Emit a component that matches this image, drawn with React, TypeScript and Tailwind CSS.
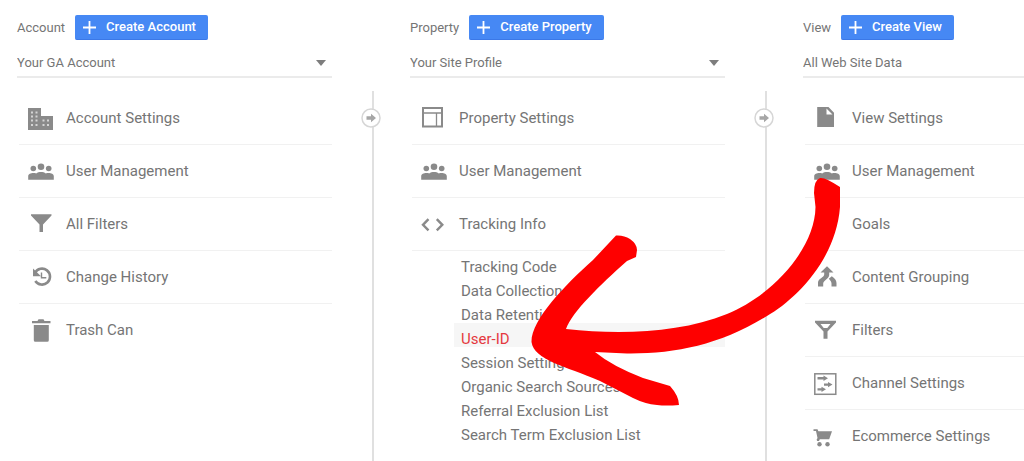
import type { ReactNode } from 'react';
import clsx from 'clsx';

type IconName =
  | 'building'
  | 'users'
  | 'funnel'
  | 'history'
  | 'trash'
  | 'layout'
  | 'code'
  | 'file'
  | 'flag'
  | 'merge'
  | 'filter'
  | 'channel'
  | 'cart';

interface Item {
  icon: IconName;
  label: string;
}

const accountItems: Item[] = [
  { icon: 'building', label: 'Account Settings' },
  { icon: 'users', label: 'User Management' },
  { icon: 'funnel', label: 'All Filters' },
  { icon: 'history', label: 'Change History' },
  { icon: 'trash', label: 'Trash Can' },
];

const propertyItems: Item[] = [
  { icon: 'layout', label: 'Property Settings' },
  { icon: 'users', label: 'User Management' },
  { icon: 'code', label: 'Tracking Info' },
];

const trackingItems = [
  'Tracking Code',
  'Data Collection',
  'Data Retention',
  'User-ID',
  'Session Settings',
  'Organic Search Sources',
  'Referral Exclusion List',
  'Search Term Exclusion List',
];

const viewItems: Item[] = [
  { icon: 'file', label: 'View Settings' },
  { icon: 'users', label: 'User Management' },
  { icon: 'flag', label: 'Goals' },
  { icon: 'merge', label: 'Content Grouping' },
  { icon: 'filter', label: 'Filters' },
  { icon: 'channel', label: 'Channel Settings' },
  { icon: 'cart', label: 'Ecommerce Settings' },
];

const icons: Record<IconName, ReactNode> = {
  building: (
    <>
      <path d="M1 4h13v8h12v14H1z" />
      <g fill="#d4d4d4">
        <path d="M4 7.5h2v2H4zM8.500 7.500h2v2h-2zM4 11.500h2v2H4zM8.500 11.500h2v2h-2zM4 15.500h2v2H4zM8.500 15.500h2v2h-2zM4 20h2v2H4zM8.500 20h2v2h-2z" />
        <path d="M15.500 15.500h2v2h-2zM20 15.500h2v2h-2zM15.500 20h2v2h-2zM20 20h2v2h-2z" />
      </g>
    </>
  ),
  users: (
    <>
      <circle cx="6.300" cy="11.500" r="2.800" />
      <circle cx="14" cy="9.800" r="3.300" />
      <circle cx="21.700" cy="11.500" r="2.800" />
      <path d="M1.200 22.800v-3.600c0-2.200 2.600-3.200 5.200-3.200 1.200 0 2 .1 2.800.4 1.300-.9 3-1.400 4.800-1.400s3.500.5 4.800 1.400c.8-.3 1.600-.4 2.800-.4 2.600 0 5.200 1 5.200 3.200v3.600z" />
    </>
  ),
  funnel: <path d="M4 4.200h20.500v1.300L16 14.500V22h-3.500v-7.500L4 5.500z" />,
  history: (
    <>
      <path
        d="M8 9.800A8 8 0 1 1 8.300 18"
        fill="none"
        stroke="currentColor"
        strokeWidth="2.600"
      />
      <path d="M6 5.500v7.700h8z" />
      <path
        d="M14.500 9.500v5.200h4.800"
        fill="none"
        stroke="currentColor"
        strokeWidth="1.400"
      />
    </>
  ),
  trash: (
    <path d="M5 5h5.500l1-1.800h5l1 1.800H23.500v2.200H5zM6.800 9h15v15.300a1.500 1.500 0 0 1-1.500 1.500h-12a1.500 1.500 0 0 1-1.500-1.500z" />
  ),
  layout: (
    <>
      <rect
        x="3"
        y="4"
        width="19"
        height="18.500"
        fill="none"
        stroke="currentColor"
        strokeWidth="2"
      />
      <path
        d="M4 9h17.500M16.500 9v13"
        fill="none"
        stroke="currentColor"
        strokeWidth="1.300"
      />
    </>
  ),
  code: (
    <path
      d="M8.500 9.200 3 14.800l5.500 5.600M16.800 9.200l5.500 5.600-5.500 5.600"
      fill="none"
      stroke="currentColor"
      strokeWidth="2.400"
    />
  ),
  file: (
    <path
      fillRule="evenodd"
      d="M4.200 3h11.300l5.500 5.800V23H4.200zM13.500 4.500v6H19.500z"
    />
  ),
  flag: <path d="M7 4h9l1 2.500h5V16h-7l-1-2.500H9V24H7z" />,
  merge: (
    <>
      <path d="M14 3.300l6.500 6.200h-4.300v2.500c0 3.500-6 5.500-6 8.500v3H5v-4c0-4 6.200-5 6.200-8V9.500H7.500z" />
      <path d="M15.800 15.800l3-2.600c2.700 1.800 4.700 3.800 4.700 6.800v3.500h-5v-3c0-1.800-1.200-3-2.700-4.700z" />
    </>
  ),
  filter: (
    <path
      fillRule="evenodd"
      d="M2 4.800h21v1.700L14.500 15.500v7.300h-4v-7.300L2 6.500zM7.500 8l3.200 4h3.600l3.200-4z"
    />
  ),
  channel: (
    <>
      <rect
        x="1.800"
        y="4.800"
        width="21"
        height="20.500"
        fill="none"
        stroke="currentColor"
        strokeWidth="1.500"
      />
      <path d="M4.500 8h6V6.500l4.500 2.800-4.500 2.800v-1.500h-6zM11 14.500h4V13l4.500 2.600-4.500 2.600v-1.500h-4zM4.500 19.200h4v-1.500l4.500 2.600-4.500 2.600v-1.500h-4z" />
    </>
  ),
  cart: (
    <>
      <path d="M.5 7.200h4l.9 2H19l-2.800 8H6.800L6 19h-1.800l-.6-1.200L4.500 16 3 9 .5 9z" />
      <circle cx="6.500" cy="22.300" r="2.200" />
      <circle cx="14.500" cy="22.300" r="2.200" />
    </>
  ),
};

function ItemIcon({ name }: { name: IconName }) {
  return (
    <svg
      viewBox="0 0 28 28"
      className="size-7 shrink-0 text-[#8a8a8a]"
      fill="currentColor"
      aria-hidden="true"
    >
      {icons[name]}
    </svg>
  );
}

interface ColumnProps {
  name: string;
  selected: string;
  items: Item[];
  bleed?: boolean;
  children?: ReactNode;
}

function Column({ name, selected, items, bleed, children }: ColumnProps) {
  const id = `${name.toLowerCase()}-select`;

  return (
    <section className="min-w-0">
      <div className="flex h-[25px] items-center gap-2.5">
        <label htmlFor={id} className="text-[13px] leading-4">
          {name}
        </label>
        <button
          type="button"
          className="flex h-[25px] items-center gap-2.5 rounded-xs border-b border-[#3b78e7] bg-[#4688f4] pr-3 pl-2 text-[13px] font-medium whitespace-nowrap text-white"
        >
          <svg
            viewBox="0 0 13 13"
            className="size-[13px]"
            stroke="currentColor"
            strokeWidth="1.800"
            aria-hidden="true"
          >
            <path d="M6.500 0v13M0 6.500h13" />
          </svg>
          Create {name}
        </button>
      </div>

      <div className="relative mt-[9px]">
        <select
          id={id}
          className="block h-[29px] w-full appearance-none border-b-2 border-[#ebebeb] bg-transparent text-[13px] outline-none"
        >
          <option>{selected}</option>
        </select>
        {!bleed && (
          <svg
            viewBox="0 0 10 6"
            className="pointer-events-none absolute top-[11px] right-1.5 h-1.5 w-2.5"
            fill="#7d7d7d"
            aria-hidden="true"
          >
            <path d="M0 0h10L5 6z" />
          </svg>
        )}
      </div>

      <ul className="mt-3.5 ml-0.5">
        {items.map((item, index) => (
          <li
            key={item.label}
            className={clsx(
              'h-[53px]',
              (index < items.length - 1 || children) &&
                'border-b border-[#f1f1f1]',
            )}
          >
            <a
              href="#"
              className="flex h-[52px] items-center gap-[11px] pl-2 text-[15px] whitespace-nowrap"
            >
              <ItemIcon name={item.icon} />
              {item.label}
            </a>
          </li>
        ))}
      </ul>
      {children}
    </section>
  );
}

function Divider() {
  return (
    <div className="relative mt-[76px] ml-10 w-0.5 bg-[#e0e0e0]" aria-hidden="true">
      <svg
        viewBox="0 0 20 20"
        className="absolute top-[17px] -left-[11px] size-5"
      >
        <circle
          cx="10"
          cy="10"
          r="9"
          fill="#fff"
          stroke="#d6d6d6"
          strokeWidth="1.500"
        />
        <path d="M5.500 8.300h4.500V5.800l5 4.200-5 4.200v-2.500H5.500z" fill="#a6a6a6" />
      </svg>
    </div>
  );
}

// Hand-drawn arrow that points at the User-ID entry
function Arrow() {
  return (
    <svg
      width="310"
      height="230"
      viewBox="530 177 310 230"
      className="pointer-events-none absolute top-[177px] left-[530px]"
      fill="#fe0000"
      aria-hidden="true"
    >
      <path d="M820 178Q825 177 840 187V207C836 260 795 300 767 316C720 345 675 354 627 353.500L595 352Q612 366 643 378L670 386Q679 396 679 405Q666 406 657 405Q645 404 633 398L600 381C565 366 534 360 531.500 342C531 320 565 285 593 260L616 235.500Q624 235 630 239Q637 244 637 250L636 257L627 261C600 285 572 312 566 329C620 335 680 333 727 314C770 297 815 250 815.500 207L814 193Q814 180 820 178Z" />
    </svg>
  );
}

export default function App() {
  return (
    <main className="relative h-screen overflow-hidden bg-white font-['Roboto',sans-serif] text-[#757575]">
      <div className="grid h-full grid-cols-[315fr_78px_315fr_78px_221fr] pt-[15px] pl-[17px]">
        <Column
          name="Account"
          selected="Your GA Account"
          items={accountItems}
        />
        <Divider />
        <Column
          name="Property"
          selected="Your Site Profile"
          items={propertyItems}
        >
          <ul className="ml-11 text-[15px] leading-4 whitespace-nowrap">
            {trackingItems.map((label) => (
              <li key={label}>
                <a
                  href="#"
                  className={clsx(
                    'block h-6 pt-2 pl-[7px]',
                    label === 'User-ID' && 'bg-[#f6f6f6] text-[#e53940]',
                  )}
                >
                  {label}
                </a>
              </li>
            ))}
          </ul>
        </Column>
        <Divider />
        <Column
          name="View"
          selected="All Web Site Data"
          items={viewItems}
          bleed
        />
      </div>
      <Arrow />
    </main>
  );
}
